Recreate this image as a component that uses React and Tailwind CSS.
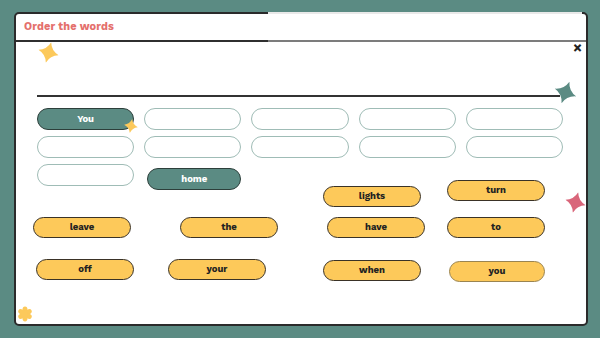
import React from 'react';

const font = { fontFamily: '"Work Sans", Inter, "Open Sans", sans-serif' };

function Star({ className, color, rotate = 0 }) {
  return (
    <svg viewBox="0 0 24 24" className={className} style={{ transform: `rotate(${rotate}deg)` }}>
      <path d="M12 0 Q14.6 9.4 24 12 Q14.6 14.6 12 24 Q9.4 14.6 0 12 Q9.4 9.4 12 0Z" fill={color} />
    </svg>
  );
}

function Flower({ className }) {
  const petals = [0, 60, 120, 180, 240, 300];
  return (
    <svg viewBox="0 0 24 24" className={className}>
      {petals.map((a) => (
        <ellipse key={a} cx="12" cy="6" rx="3.8" ry="5.2" fill="#fcc95b" transform={`rotate(${a} 12 12)`} />
      ))}
      <circle cx="12" cy="12" r="4" fill="#fcc95b" />
    </svg>
  );
}

function Slot() {
  return <div className="h-[22px] rounded-full border-[1.5px] border-[#9fbcb6] bg-white" />;
}

const chips = [
  { word: 'lights', x: 307, y: 172 },
  { word: 'turn', x: 431, y: 166 },
  { word: 'leave', x: 17, y: 203 },
  { word: 'the', x: 164, y: 203 },
  { word: 'have', x: 311, y: 203 },
  { word: 'to', x: 431, y: 203 },
  { word: 'off', x: 20, y: 245 },
  { word: 'your', x: 152, y: 245 },
  { word: 'when', x: 307, y: 246 },
  { word: 'you', x: 433, y: 247, soft: true },
];

export default function App() {
  return (
    <div className="w-[600px] h-[338px] bg-[#5b8b83] pt-[12px] pl-[14px] overflow-hidden" style={font}>
      <div className="relative w-[574px] h-[314px] bg-white border-2 border-[#2b2b2b] rounded-[5px]">
        <div className="absolute -top-[2px] left-[252px] right-[4px] h-[2px] bg-[#e9e9e9]" />

        <div className="h-[26px] flex items-center pl-[8px]">
          <span className="text-[11px] font-bold text-[#e46f6c] tracking-[0.1px]">Order the words</span>
        </div>
        <div className="flex h-[2px]">
          <div className="w-[252px] bg-[#2f2f2f]" />
          <div className="flex-1 bg-[#7c7c7c]" />
        </div>

        <div className="absolute right-[4px] top-[27px] text-[15px] font-bold leading-none text-[#222]">×</div>

        <div className="pl-[21px] pr-[24px]">
          <div className="mt-[53px] h-[2px] w-[523px] bg-[#333]" />

          <div className="mt-[11px] grid grid-cols-5 gap-x-[10px] gap-y-[6px] w-[526px]">
            <div className="h-[22px] rounded-full border-[1.5px] border-[#2d3f3b] bg-[#5b8b83] flex items-center justify-center text-[9.5px] font-bold text-white">
              You
            </div>
            <Slot />
            <Slot />
            <Slot />
            <Slot />
            <Slot />
            <Slot />
            <Slot />
            <Slot />
            <Slot />
            <Slot />
            <div className="mt-[4px] ml-[3px] h-[22px] rounded-full border-[1.5px] border-[#2d3f3b] bg-[#5b8b83] flex items-center justify-center text-[9.5px] font-bold text-white">
              home
            </div>
          </div>
        </div>

        {chips.map((c) => (
          <div
            key={c.word}
            className={
              c.soft
                ? 'absolute w-[96px] h-[21px] rounded-full border-[1.5px] border-[#9a8450] bg-[#fdc95a] flex items-center justify-center text-[9.5px] font-bold text-[#222]'
                : 'absolute w-[98px] h-[21px] rounded-full border-[1.5px] border-[#3a3226] bg-[#fdc95a] flex items-center justify-center text-[9.5px] font-bold text-[#222]'
            }
            style={{ left: c.x, top: c.y }}
          >
            {c.word}
          </div>
        ))}

        <Star className="absolute left-[22px] top-[28px] w-[21px] h-[21px]" color="#fcc95b" rotate={15} />
        <Star className="absolute left-[538px] top-[67px] w-[23px] h-[23px]" color="#5b8b83" rotate={20} />
        <Star className="absolute left-[108px] top-[105px] w-[14px] h-[14px]" color="#fcc95b" rotate={10} />
        <Star className="absolute left-[549px] top-[178px] w-[21px] h-[21px]" color="#d9667a" rotate={15} />
        <Flower className="absolute left-[1px] top-[292px] w-[16px] h-[16px]" />
      </div>
    </div>
  );
}
